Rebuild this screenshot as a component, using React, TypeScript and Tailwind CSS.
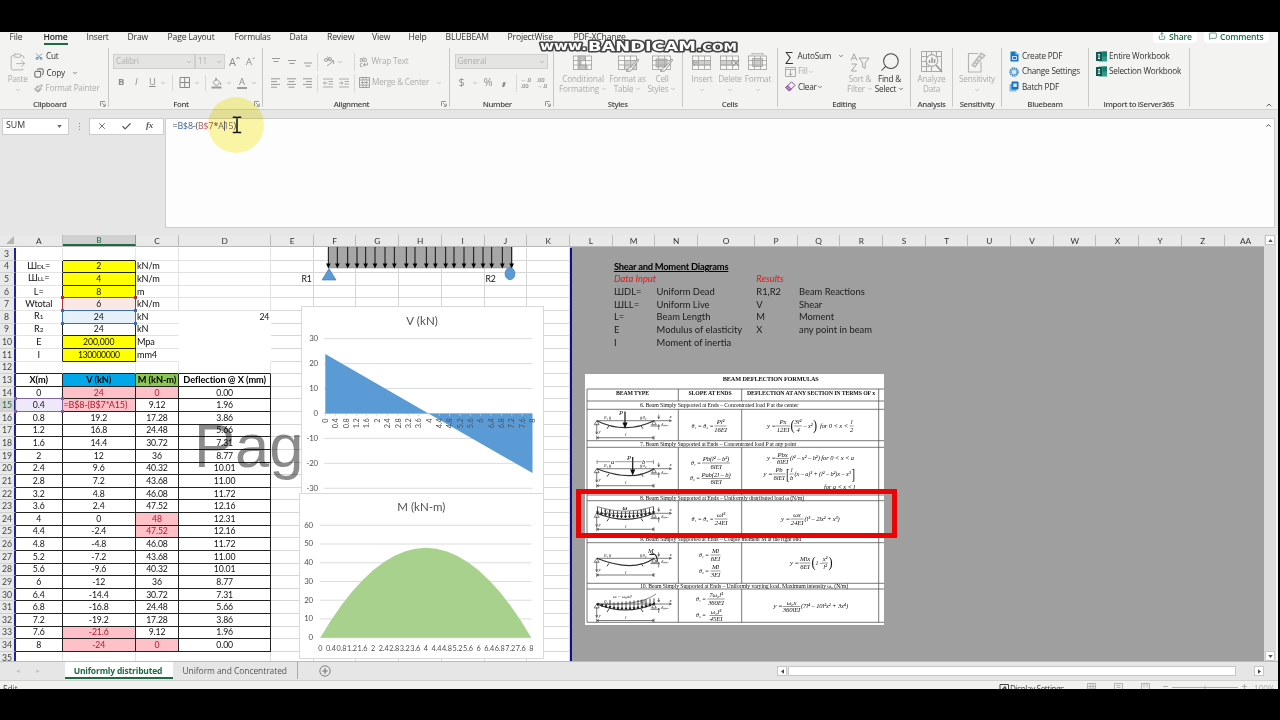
import React from "react";
import { Check, ChevronDown, ChevronUp, ClipboardPaste, Copy, MessageSquare, Paintbrush, Scissors, Search, Share, X } from "lucide-react";

type Kids = { children?: React.ReactNode };

const Caret = ({ c = "text-[#555]" }: { c?: string }) => <ChevronDown className={"h-[6px] w-[6px] shrink-0 " + c} strokeWidth={3} />;

/* ---------- menu tabs ---------- */

const menu: [string, string][] = [
  ["File", "w-[34px]"],
  ["Home", "w-[43px]"],
  ["Insert", "w-[41px]"],
  ["Draw", "w-[40px]"],
  ["Page Layout", "w-[67px]"],
  ["Formulas", "w-[55px]"],
  ["Data", "w-[37.5px]"],
  ["Review", "w-[45px]"],
  ["View", "w-[36.5px]"],
  ["Help", "w-[37px]"],
  ["BLUEBEAM", "w-[62px]"],
  ["ProjectWise", "w-[66px]"],
  ["PDF-XChange", "w-[60px]"],
];

function MenuTabs() {
  return (
    <div className="flex h-[13px] shrink-0 items-start pl-[9.500px] text-[8.600px] leading-[10px] text-[#333]">
      {menu.map(([name, w]) => (
        <div key={name} className={"shrink-0 whitespace-nowrap " + w}>
          <span
            className={
              name === "Home"
                ? "inline-block h-[12.500px] border-b-2 border-[#1e6b43] font-semibold tracking-[-0.2px] text-[#222]"
                : "inline-block tracking-[-0.15px]"
            }
          >
            {name}
          </span>
        </div>
      ))}
      <div className="ml-auto flex h-[11px] w-[44px] items-start gap-[3px] rounded-b-sm bg-white pl-[5px] font-semibold tracking-[-0.2px] text-[#1e6b43]">
        <Share className="h-[8px] w-[8px]" />
        Share
      </div>
      <div className="mr-[9px] ml-[7px] flex h-[11px] w-[65px] items-start gap-[3px] rounded-b-sm bg-white pl-[5px] font-semibold tracking-[-0.2px] text-[#1e6b43]">
        <MessageSquare className="h-[8px] w-[8px]" />
        Comments
      </div>
    </div>
  );
}

/* ---------- ribbon ---------- */

const Launcher = () => (
  <svg viewBox="0 0 6 6" className="h-[6px] w-[6px]" fill="none" stroke="#888" strokeWidth="0.9">
    <path d="M.5 5V.5H5M2 2l3 3M5.3 2.6V5.3H2.6" />
  </svg>
);

function Group({ w, label, launcher, children }: Kids & { w: string; label: string; launcher?: boolean }) {
  return (
    <div className={"flex h-[59px] shrink-0 flex-col border-r border-[#c9c9c7] " + w}>
      <div className="flex h-[50px] shrink-0">{children}</div>
      <div className="flex h-[12px] shrink-0 items-center text-[7.800px] leading-[12px] font-semibold tracking-[-0.350px] text-[#484848]">
        <span className="flex-1 text-center whitespace-nowrap">{label}</span>
        {launcher && (
          <span className="mr-[2px]">
            <Launcher />
          </span>
        )}
      </div>
    </div>
  );
}

function Big({ w, icon, a, b, arrow, dark }: { w: string; icon: React.ReactNode; a: string; b?: string; arrow?: boolean; dark?: boolean }) {
  return (
    <div className={"flex shrink-0 flex-col items-center text-[8.200px] leading-[10.500px] tracking-[-0.2px] whitespace-nowrap " + w + (dark ? " text-[#333]" : " text-[#acacaa]")}>
      <div className="flex h-[25.500px] items-center justify-center pt-[3px]">{icon}</div>
      <div>{a}</div>
      <div className="flex items-center gap-[2px]">
        {b}
        {arrow && (
          <span className={b ? "" : "pt-[3px]"}>
            <Caret c={dark ? "text-[#444]" : "text-[#b4b4b2]"} />
          </span>
        )}
      </div>
    </div>
  );
}

const Row = ({ children, c = "" }: Kids & { c?: string }) => <div className={"flex items-center whitespace-nowrap " + c}>{children}</div>;

const AlignIcon = ({ k }: { k: number }) => {
  const paths = [
    "M1 1.5h8M2.5 4.5h5",
    "M1 3.5h8M2.5 6.5h5",
    "M1 6h8M2.5 9h5",
    "M0 .8h9M0 3.6h6M0 6.4h9M0 9.2h6",
    "M0 .8h9M1.5 3.6h6M0 6.4h9M1.5 9.2h6",
    "M0 .8h9M3 3.6h6M0 6.4h9M3 9.2h6",
  ];
  return (
    <svg viewBox="0 0 10 10" className="h-[10px] w-[10px]" fill="none" stroke="#9a9a98" strokeWidth="1">
      <path d={paths[k]} />
    </svg>
  );
};

const IndentIcon = ({ left }: { left?: boolean }) => (
  <svg viewBox="0 0 10 10" className="h-[10px] w-[10px]" fill="none" stroke="#a4a4a2" strokeWidth="0.9">
    <path d="M0 1h10M5.5 3.5H10M5.5 6H10M0 9h10" />
    <path d={left ? "M4.5 5H.6M2.3 3.2L.5 5l1.8 1.8" : "M0 5h4M2.3 3.2L4.1 5 2.3 6.8"} />
  </svg>
);

const TableIcon = ({ kind }: { kind: "cond" | "table" | "cell" | "ins" | "del" | "fmt" }) => (
  <svg viewBox="0 0 22 19" className="h-[19px] w-[22px]" fill="none" stroke="#a8a8a6" strokeWidth="0.9">
    <rect x="1.5" y="3" width="18" height="13.5" fill="#f8f8f7" />
    {kind === "cond" && <path d="M6 3h7v4.500H6zM6 7.500h3v4.500H6zM6 12h9v4.500H6z" fill="#c3c3c1" />}
    {kind === "table" && <path d="M7.500 7.500h12v9h-12z" fill="#d4d4d2" />}
    {kind === "cell" && <path d="M5 6h11v8H5z" fill="#c3c3c1" />}
    {kind === "ins" && <path d="M1.500 7.500h18v4.500h-18z" fill="#d0d0ce" />}
    {kind === "del" && <path d="M1.500 7.500h11v4.500h-11z" fill="#d0d0ce" />}
    {kind === "fmt" && <path d="M5.500 5.500h10v8h-10z" fill="#cfcfcd" />}
    <path d="M1.5 7.500h18M1.500 12h18M7.500 3v13.500M13.500 3v13.500" />
    {(kind === "table" || kind === "cell") && <path d="M21 6l-7 8c-2 0-2 3-5 4 3 1 6 0 6.500-2.500l6-8z" fill="#f3f3f1" stroke="#8d8d8b" />}
    {kind === "del" && <path d="M14 7l6 6M20 7l-6 6" stroke="#999" strokeWidth="1.200" />}
    {kind === "ins" && <path d="M8 9.700H1M4 7L1 9.700l3 2.800" stroke="#999" />}
    {kind === "fmt" && <path d="M5 .8h11M5-.5v2.600M16-.5v2.600" />}
  </svg>
);

const BookIcon = () => (
  <svg viewBox="0 0 11 11" className="h-[11px] w-[11px]">
    <rect x="3" y=".5" width="8" height="10" fill="#2f9a86" />
    <path d="M6.500 .5H11v5H6.500z" fill="#1c7a6b" />
    <rect x="0" y="1" width="6" height="9" fill="#0f5c55" />
    <path d="M2 3.500h2M3 3.500v4M2 7.500h2" stroke="#fff" strokeWidth=".9" />
  </svg>
);

function Ribbon() {
  return (
    <div className="flex h-[65px] shrink-0 border-b border-[#d2d2d0] pt-[3px] text-[8.200px] tracking-[-0.220px] text-[#333]">
      <Group w="w-[108.500px]" label="Clipboard" launcher>
        <Big w="w-[33.500px] pl-[2px]" a="Paste" arrow icon={<ClipboardPaste className="h-[20px] w-[19px] text-[#b0b0ae]" strokeWidth={1.2} />} />
        <div className="flex flex-col">
          <Row c="h-[17px] gap-[3.500px] pl-[1px]">
            <Scissors className="h-[9px] w-[8px] -rotate-90 text-[#2f6f9f]" strokeWidth={2} />
            Cut
          </Row>
          <Row c="h-[15.500px] gap-[3px]">
            <Copy className="h-[10px] w-[10px] -scale-x-100 text-[#444]" strokeWidth={2} />
            Copy
            <span className="ml-[4px]">
              <Caret />
            </span>
          </Row>
          <Row c="h-[16px] gap-[3px] text-[#acacaa]">
            <Paintbrush className="h-[9px] w-[9px] text-[#999]" strokeWidth={2.5} />
            Format Painter
          </Row>
        </div>
      </Group>
      <Group w="w-[154px]" label="Font" launcher>
        <div className="flex flex-col pt-[5px] pl-[4.500px]">
          <Row c="h-[17px]">
            <div className="flex h-[15px] w-[82px] items-center justify-between border border-[#cfcfcd] bg-[#e4e4e2] px-[2px] text-[#b0b0ae]">
              Calibri <Caret c="text-[#aaa]" />
            </div>
            <div className="flex h-[15px] w-[30px] items-center justify-between border border-[#cfcfcd] bg-[#e4e4e2] px-[2px] text-[#b0b0ae]">
              11 <Caret c="text-[#aaa]" />
            </div>
            <span className="ml-[4px] text-[11px] leading-[12px] text-[#8c8c8a]">Aˆ</span>
            <span className="ml-[6px] text-[9.500px] leading-[12px] text-[#8c8c8a]">Aˇ</span>
          </Row>
          <Row c="mt-[4px] h-[17px] text-[9.500px] text-[#8e8e8c]">
            <span className="w-[16px] pl-[5px] font-bold">B</span>
            <span className="w-[15px] pl-[6px] italic">I</span>
            <span className="w-[11px] pl-[5px] underline">U</span>
            <span className="ml-[5px]">
              <Caret c="text-[#aaa]" />
            </span>
            <div className="mx-[6px] h-[16px] w-px bg-[#d8d8d6]" />
            <svg viewBox="0 0 11 11" className="h-[11px] w-[11px]" fill="none" stroke="#888" strokeWidth="1">
              <path d="M1 .5h9.500v10H1zM5.700 .5v10M1 5.500h9.500" />
            </svg>
            <span className="ml-[4px]">
              <Caret c="text-[#aaa]" />
            </span>
            <div className="mx-[5px] h-[16px] w-px bg-[#d8d8d6]" />
            <svg viewBox="0 0 11 12" className="h-[12px] w-[11px]" fill="none" stroke="#888" strokeWidth=".9">
              <path d="M2 5.500L5.500 2 9 5.500 5.500 9zM5 .5v3.500M9.700 6v2" />
              <path d="M.5 10.500h10" stroke="#9c9c9a" strokeWidth="2" />
            </svg>
            <span className="ml-[4px]">
              <Caret c="text-[#aaa]" />
            </span>
            <span className="ml-[5px] h-[12px] border-b-2 border-[#9c9c9a] px-[2px] leading-[10px]">A</span>
            <span className="ml-[4px]">
              <Caret c="text-[#aaa]" />
            </span>
          </Row>
        </div>
      </Group>
      <Group w="w-[187px]" label="Alignment" launcher>
        <div className="flex flex-col pt-[5px] pl-[8px] text-[#acacaa]">
          <Row c="h-[17px]">
            <div className="flex gap-[6px]">
              <AlignIcon k={0} />
              <AlignIcon k={1} />
              <AlignIcon k={2} />
            </div>
            <div className="mr-[5px] ml-[4px] h-[18px] w-px bg-[#d8d8d6]" />
            <svg viewBox="0 0 12 11" className="mr-[2px] h-[11px] w-[12px]" fill="none" stroke="#9a9a98" strokeWidth=".9">
              <circle cx="3" cy="4" r="1.500" />
              <path d="M4 2.500l1.200 2.700M4.500 .5l2.200 4.200M4 10l6.500-5M10.700 8V4.800H7.500" />
              <circle cx="7" cy="3" r="1.500" />
            </svg>
            <Caret c="text-[#aaa]" />
            <div className="mr-[5px] ml-[11px] h-[18px] w-px bg-[#d8d8d6]" />
            <span className="w-[12px] text-[6.500px] leading-[5px] font-semibold text-[#999]">
              ab
              <br />
              c↵
            </span>
            Wrap Text
          </Row>
          <Row c="mt-[4px] h-[17px]">
            <div className="flex gap-[6px]">
              <AlignIcon k={3} />
              <AlignIcon k={4} />
              <AlignIcon k={5} />
            </div>
            <div className="mr-[5px] ml-[4px] h-[18px] w-px bg-[#d8d8d6]" />
            <div className="flex gap-[6px]">
              <IndentIcon left />
              <IndentIcon />
            </div>
            <div className="mr-[4px] ml-[5px] h-[18px] w-px bg-[#d8d8d6]" />
            <svg viewBox="0 0 11 11" className="mr-[2.500px] h-[11px] w-[11px]" fill="none" stroke="#999" strokeWidth=".9">
              <path d="M.5 .5h10v10H.5zM.5 3h10M.5 8h10M4 .5V3M7 .5V3M4 8v2.500M7 8v2.500M2.500 5.500h6M4 4.300L2.500 5.500 4 6.700M7 4.300l1.500 1.200L7 6.700" />
            </svg>
            Merge &amp; Center
            <span className="ml-[7px]">
              <Caret c="text-[#bbb]" />
            </span>
          </Row>
        </div>
      </Group>
      <Group w="w-[104.500px]" label="Number" launcher>
        <div className="flex flex-col pt-[6px] pl-[5px]">
          <div className="flex h-[15px] w-[93px] items-center justify-between border border-[#cfcfcd] bg-[#e4e4e2] px-[2px] text-[#b0b0ae]">
            General <Caret c="text-[#aaa]" />
          </div>
          <Row c="mt-[5px] h-[17px] pl-[4px] text-[11px] text-[#8e8e8c]">
            <span>$</span>
            <span className="ml-[7px]">
              <Caret c="text-[#aaa]" />
            </span>
            <span className="ml-[6px]">%</span>
            <span className="mt-[-12px] ml-[9px] text-[19px] leading-[12px] font-bold">,</span>
            <div className="mr-[4px] ml-[9px] h-[18px] w-px bg-[#d8d8d6]" />
            <span className="w-[16px] text-[6px] leading-[6px] font-semibold">
              ←.0
              <br />
              .00
            </span>
            <span className="text-[6px] leading-[6px] font-semibold">
              .00
              <br />→.0
            </span>
          </Row>
        </div>
      </Group>
      <Group w="w-[128.500px]" label="Styles">
        <Big w="w-[58px]" a="Conditional" b="Formatting" arrow icon={<TableIcon kind="cond" />} />
        <Big w="w-[31px]" a="Format as" b="Table" arrow icon={<TableIcon kind="table" />} />
        <Big w="w-[38px]" a="Cell" b="Styles" arrow icon={<TableIcon kind="cell" />} />
      </Group>
      <Group w="w-[95.500px]" label="Cells">
        <Big w="w-[39px]" a="Insert" arrow icon={<TableIcon kind="ins" />} />
        <Big w="w-[17px]" a="Delete" arrow icon={<TableIcon kind="del" />} />
        <Big w="w-[39px]" a="Format" arrow icon={<TableIcon kind="fmt" />} />
      </Group>
      <Group w="w-[133px]" label="Editing">
        <div className="flex w-[68px] shrink-0 flex-col pl-[7px]">
          <Row c="h-[16px]">
            <span className="w-[12.500px] text-[13px] leading-[12px]">∑</span>AutoSum
            <span className="ml-[7px]">
              <Caret />
            </span>
          </Row>
          <Row c="h-[15px] text-[#b0b0ae]">
            <svg viewBox="0 0 11 10" className="mr-[2px] h-[10px] w-[11px]" fill="none" stroke="#a5a5a3" strokeWidth=".9">
              <path d="M.5 .5h10v9H.5zM.5 2.500h10M5.500 3.500v5M3.700 6.500l1.800 2 1.800-2" />
            </svg>
            Fill <Caret c="text-[#bbb]" />
          </Row>
          <Row c="h-[15.500px]">
            <svg viewBox="0 0 11 11" className="mr-[2px] h-[11px] w-[11px]" fill="none" stroke="#8a4a94" strokeWidth="1">
              <path d="M.8 6.500L6.500 .8l3.500 3.500L4.300 10z" />
              <path d="M.8 6.500l2-2 3.500 3.500-2 2z" fill="#b58abf" />
            </svg>
            Clear <Caret />
          </Row>
        </div>
        <Big
          w="w-[28px]"
          a="Sort &"
          b="Filter"
          arrow
          icon={
            <svg viewBox="0 0 20 19" className="h-[19px] w-[20px]" fill="none" stroke="#a6a6a4" strokeWidth="1">
              <path d="M1 7.500L4 .8l3 6.700M2.200 5.300h3.700M1.300 11h5.400L1.300 18h5.400M9 5h10l-3.800 5v5.500l-2.500-1.500v-4z" />
            </svg>
          }
        />
        <Big w="w-[31px]" a="Find &" b="Select" arrow dark icon={<Search className="h-[22px] w-[22px] -scale-x-100 text-[#444]" strokeWidth={1.1} />} />
      </Group>
      <Group w="w-[42px]" label="Analysis">
        <Big
          w="w-[41px]"
          a="Analyze"
          b="Data"
          icon={
            <svg viewBox="0 0 22 22" className="h-[22px] w-[22px]" fill="none" stroke="#999" strokeWidth="1">
              <path d="M.5 .5h20v20H.5zM.5 5.500h20M.5 10.500h5M.5 15.500h8M5.500 .5v20M10.500 .5v4M15.500 .5v5M10.500 16v5" stroke="#aaa" />
              <circle cx="11" cy="9.500" r="5.800" fill="#f5f5f3" />
              <path d="M8.500 12V9M11 12V6.500M13.500 12V8" strokeWidth="1.500" />
              <path d="M15 14l6 7" strokeWidth="1.600" />
            </svg>
          }
        />
      </Group>
      <Group w="w-[49px]" label="Sensitivity">
        <Big
          w="w-[48px]"
          a="Sensitivity"
          arrow
          icon={
            <svg viewBox="0 0 20 21" className="h-[21px] w-[20px]" fill="none" stroke="#b2b2b0" strokeWidth="1.100">
              <path d="M11 1.500H1.500v18.500H14V10" />
              <path d="M5 13l7-9 3 2-7 9zM12 4l2-3 4 2.500-2.500 3M7 10l3 2M9 7.500l3 2" fill="#dededc" />
            </svg>
          }
        />
      </Group>
      <Group w="w-[87px]" label="Bluebeam">
        <div className="flex flex-col pl-[7px]">
          <Row c="h-[16px] gap-[3px]">
            <svg viewBox="0 0 10 11" className="h-[11px] w-[10px]">
              <path d="M1.500 .5h5l3 3v7h-8z" fill="#1878c8" />
              <path d="M6.500 .5v3h3" fill="#9fd0f5" />
              <path d="M3.500 5.500h4v3h-4z" fill="none" stroke="#fff" strokeWidth=".8" />
            </svg>
            Create PDF
          </Row>
          <Row c="h-[15px] gap-[3px]">
            <svg viewBox="0 0 10 10" className="h-[10px] w-[10px]" fill="none">
              <circle cx="5" cy="5" r="3.900" stroke="#4a92cf" strokeWidth="1.800" strokeDasharray="1.600 .6" />
              <circle cx="5" cy="5" r="2.800" stroke="#4a92cf" strokeWidth=".8" fill="#d9ebf8" />
            </svg>
            Change Settings
          </Row>
          <Row c="h-[15.500px] gap-[3px]">
            <svg viewBox="0 0 10 11" className="h-[11px] w-[10px]">
              <rect x=".5" y="3" width="7" height="7.500" rx="1" fill="#7db9ea" />
              <rect x="2.500" y=".5" width="7" height="8" rx="1" fill="#1a6fbd" />
              <rect x="4.300" y="2.500" width="3.500" height="3.500" fill="#d6eafa" />
            </svg>
            Batch PDF
          </Row>
        </div>
      </Group>
      <Group w="w-[100.500px]" label="Import to iServer365">
        <div className="flex flex-col pl-[7px]">
          <Row c="h-[16px] gap-[2px]">
            <BookIcon />
            Entire Workbook
          </Row>
          <Row c="h-[15px] gap-[2px]">
            <BookIcon />
            Selection Workbook
          </Row>
        </div>
      </Group>
      <ChevronUp className="mt-[53px] mr-[5px] ml-auto h-[8px] w-[8px] text-[#444]" strokeWidth={2.5} />
    </div>
  );
}

/* ---------- formula bar ---------- */

function FormulaBar() {
  return (
    <div className="flex h-[125px] shrink-0 bg-[#e6e6e6] pt-[7.500px] pl-[2px] text-[8.800px]">
      <div className="flex h-[17px] w-[67px] items-center justify-between border border-[#cdcdcd] bg-white pr-[6px] pl-[3px] text-[#333]">
        SUM
        <svg viewBox="0 0 6 4" className="h-[3px] w-[5px]">
          <path d="M0 0h6L3 4z" fill="#666" />
        </svg>
      </div>
      <div className="flex h-[17px] w-[20px] flex-col items-center justify-center gap-[2px]">
        <i className="h-px w-px bg-[#888]" />
        <i className="h-px w-px bg-[#888]" />
        <i className="h-px w-px bg-[#888]" />
      </div>
      <div className="flex h-[17px] w-[75px] items-center border border-[#cdcdcd] bg-white text-[#555]">
        <X className="ml-[7px] h-[10px] w-[10px]" strokeWidth={2} />
        <Check className="ml-[14px] h-[11px] w-[11px]" strokeWidth={2.5} />
        <span className="ml-[14px] font-['Liberation_Serif',serif] text-[9px] font-bold tracking-[-0.2px] italic">fx</span>
      </div>
      <div className="ml-[1px] flex h-[110px] w-[1110px] items-start justify-between border border-[#cdcdcd] bg-[#fdfdfd] pt-[1px] pr-[2px] pl-[6.500px]">
        <span className="leading-[12px] tracking-[-0.120px] whitespace-nowrap text-[#444]">
          =<span className="text-[#3a68a8]">B$8</span>-(<span className="text-[#b5555a]">B$7</span>*<span className="text-[#7b6c98]">A15</span>)
        </span>
        <ChevronUp className="mt-[2px] h-[7px] w-[7px] text-[#333]" strokeWidth={3} />
      </div>
    </div>
  );
}

/* ---------- sheet ---------- */

const leftCols: [string, string][] = [
  ["A", "w-[46.500px]"],
  ["B", "w-[73.500px]"],
  ["C", "w-[43px]"],
  ["D", "w-[92.300px]"],
  ["E", "w-[42.500px]"],
  ["F", "w-[42.700px]"],
  ["G", "w-[42.700px]"],
  ["H", "w-[42.700px]"],
  ["I", "w-[42.700px]"],
  ["J", "w-[42.700px]"],
  ["K", "w-[42.700px]"],
];

const rightCols: [string, string][] = [
  ["L", "w-[42.700px]"],
  ["M", "w-[42.700px]"],
  ["N", "w-[42.700px]"],
  ["O", "w-[57px]"],
  ["P", "w-[42.700px]"],
  ["Q", "w-[42.700px]"],
  ["R", "w-[42.700px]"],
  ["S", "w-[42.700px]"],
  ["T", "w-[42.700px]"],
  ["U", "w-[42.700px]"],
  ["V", "w-[42.700px]"],
  ["W", "w-[42.700px]"],
  ["X", "w-[42.700px]"],
  ["Y", "w-[42.700px]"],
  ["Z", "w-[42.700px]"],
  ["AA", "w-[42.700px]"],
];

const rows = Array.from({ length: 33 }, (_, i) => i + 3);

const table: [string, string, string, string][] = [
  ["0", "24", "0", "0.00"],
  ["0.4", "=B$8-(B$7*A15)", "9.12", "1.96"],
  ["0.8", "19.2", "17.28", "3.86"],
  ["1.2", "16.8", "24.48", "5.66"],
  ["1.6", "14.4", "30.72", "7.31"],
  ["2", "12", "36", "8.77"],
  ["2.4", "9.6", "40.32", "10.01"],
  ["2.8", "7.2", "43.68", "11.00"],
  ["3.2", "4.8", "46.08", "11.72"],
  ["3.6", "2.4", "47.52", "12.16"],
  ["4", "0", "48", "12.31"],
  ["4.4", "-2.4", "47.52", "12.16"],
  ["4.8", "-4.8", "46.08", "11.72"],
  ["5.2", "-7.2", "43.68", "11.00"],
  ["5.6", "-9.6", "40.32", "10.01"],
  ["6", "-12", "36", "8.77"],
  ["6.4", "-14.4", "30.72", "7.31"],
  ["6.8", "-16.8", "24.48", "5.66"],
  ["7.2", "-19.2", "17.28", "3.86"],
  ["7.6", "-21.6", "9.12", "1.96"],
  ["8", "-24", "0", "0.00"],
];

const sub = (t: string) => (
  <>
    Ш<span className="text-[6.500px]">{t}</span>=
  </>
);

const inputs: Record<string, React.ReactNode> = {
  A4: sub("DL"), B4: "2", C4: "kN/m",
  A5: sub("LL"), B5: "4", C5: "kN/m",
  A6: "L=", B6: "8", C6: "m",
  A7: "Wtotal", B7: "6", C7: "kN/m",
  A8: <>R<span className="text-[6.500px]">1</span></>, B8: "24", C8: "kN", D8: "24",
  A9: <>R<span className="text-[6.500px]">2</span></>, B9: "24", C9: "kN",
  A10: "E", B10: "200,000", C10: "Mpa",
  A11: "I", B11: "130000000", C11: "mm4",
  A13: "X(m)", B13: "V (kN)", C13: "M (kN-m)", D13: "Deflection @ X (mm)",
  E5: "R1", J5: "R2",
};

const notes: Record<string, string> = {
  M4: "Shear and Moment Diagrams",
  M5: "Data Input", P5: "Results",
  M6: "ШDL=", N6: "Uniform Dead", P6: "R1,R2", Q6: "Beam Reactions",
  M7: "ШLL=", N7: "Uniform Live", P7: "V", Q7: "Shear",
  M8: "L=", N8: "Beam Length", P8: "M", Q8: "Moment",
  M9: "E", N9: "Modulus of elasticity", P9: "X", Q9: "any point in beam",
  M10: "I", N10: "Moment of inertia",
};

const pink = new Set(["B14", "C14", "B15", "C24", "C25", "B33", "B34", "C34"]);

function cellClass(col: string, r: number) {
  const id = col + r;
  const inTable = r >= 13 && r <= 34 && "ABCD".includes(col);
  const inputBox = col === "B" && r >= 4 && r <= 11;
  let s = "";
  if (inTable || inputBox) s += " border-[#222]";
  else if (col === "B" && r === 3) s += " border-b-[#222] border-r-[#e9e9e9]";
  else if ("ABCD".includes(col) && r === 12) s += " border-b-[#222] border-r-[#e9e9e9]";
  else if (col === "A" && r >= 4 && r <= 11) s += " border-r-[#222] border-b-[#e4e4e4]";
  else if (col === "D" && r >= 8) s += r === 35 ? " border-[#dcdcdc]" : " border-transparent";
  else if (col === "C" && r >= 8) s += " border-b-[#e4e4e4] border-r-transparent";
  else if ("ABCD".includes(col)) s += " border-[#e2e2e2]";
  else s += " border-[#d6d6d6]";
  if (pink.has(id)) s += " bg-[#ffc0c8] text-[#a82030]";
  else if (id === "B13") s += " bg-[#00a8ea]";
  else if (id === "C13") s += " bg-[#8cc653]";
  else if (id === "A15") s += " bg-[#efe8f8]";
  else if (id === "B7") s += " bg-[#f9e8e6]";
  else if (id === "B8") s += " bg-[#e6f0fa]";
  else if (inputBox && r !== 9) s += " bg-[#ffff00]";
  if (r === 13) s += " text-[9.200px] tracking-[-0.050px] font-bold text-black";
  else if (id === "B15") s += " text-[9px] tracking-[-0.150px]";
  else if (id === "B11") s += " tracking-[-0.400px]";
  else if (r < 13 && (col === "A" || col === "C")) s += " text-[9.200px]";
  if (id === "B15" || col === "J") s += " justify-start pl-[1px]";
  else if (col === "C" && r < 13) s += " justify-start pl-[1px]";
  else if (id === "D8" || col === "E") s += " justify-end pr-[1px]";
  else s += " justify-center";
  return s;
}

const Selection = ({ c }: { c: "red" | "blue" | "purple" }) => {
  const line = { red: "border-[#b03038]", blue: "border-[#3b6ea8]", purple: "border-[#8064a2]" }[c];
  const dot = { red: "bg-[#b03038]", blue: "bg-[#3b6ea8]", purple: "bg-[#8064a2]" }[c];
  return (
    <span className={"absolute -top-px -right-px -bottom-px -left-px z-10 border " + line}>
      <i className={"absolute -top-[2px] -left-[2px] h-[3px] w-[3px] " + dot} />
      <i className={"absolute -top-[2px] -right-[2px] h-[3px] w-[3px] " + dot} />
      <i className={"absolute -bottom-[2px] -left-[2px] h-[3px] w-[3px] " + dot} />
      <i className={"absolute -right-[2px] -bottom-[2px] h-[3px] w-[3px] " + dot} />
    </span>
  );
};

function SheetRow({ r }: { r: number }) {
  return (
    <div className="flex h-[12.640px] shrink-0">
      <div
        className={
          "flex w-[16px] shrink-0 items-center border-r-2 border-b border-b-[#cfcfcf] border-r-[#22229a] " +
          (r === 15 ? "bg-[#d4d4d4] text-[#1e6b43]" : "bg-[#e9e9e9] text-[#444]") +
          (r < 10 ? " pl-[4px]" : " pl-[2px]")
        }
      >
        {r}
      </div>
      {leftCols.map(([c, w]) => {
        const id = c + r;
        const text = r >= 14 && r <= 34 && "ABCD".includes(c) ? table[r - 14]["ABCD".indexOf(c)] : inputs[id];
        return (
          <div key={c} className={"relative flex shrink-0 items-center border-r border-b whitespace-nowrap " + w + cellClass(c, r)}>
            <span>{text}</span>
            {id === "B7" && <Selection c="red" />}
            {id === "B8" && <Selection c="blue" />}
            {id === "A15" && <Selection c="purple" />}
          </div>
        );
      })}
      <div className="w-[2.500px] shrink-0 bg-[#10108c]" />
      <div className="w-[40px] shrink-0" />
      {rightCols.slice(1, 7).map(([c, w]) => {
        const id = c + r;
        return (
          <div
            key={c}
            className={
              "flex shrink-0 items-center pl-[1.500px] text-[9.400px] tracking-normal whitespace-nowrap text-[#1c1c1c] " +
              w +
              (id === "M4" ? " font-bold text-black tracking-[-0.250px]! underline" : "") +
              (r === 5 ? " text-[#e01818]! italic" : "")
            }
          >
            {notes[id]}
          </div>
        );
      })}
    </div>
  );
}

function ColumnHeads() {
  const head = ([c, w]: [string, string]) => (
    <div
      key={c}
      className={
        "flex shrink-0 items-center justify-center border-r " +
        w +
        (c === "B" ? " border-b-2 border-r-[#999] border-b-[#1e6b43] bg-[#d0d0d0] text-[#1e6b43]" : " border-r-[#bdbdbd]")
      }
    >
      {c}
    </div>
  );
  return (
    <div className="flex h-[12px] shrink-0 overflow-hidden border-b border-[#b8b8b8] bg-[#e9e9e9] text-[8.300px] text-[#333]">
      <div className="flex w-[16px] shrink-0 items-end justify-end pr-[2px] pb-[2px]">
        <svg viewBox="0 0 8 8" className="h-[8px] w-[8px]">
          <path d="M8 0v8H0z" fill="#b4b4b4" />
        </svg>
      </div>
      {leftCols.map(head)}
      {rightCols.map(head)}
    </div>
  );
}

/* ---------- charts and drawings ---------- */

const steps = Array.from({ length: 21 }, (_, i) => String(Math.round(i * 4) / 10));

function LoadDrawing() {
  const xs = [145, 172, 203, 231, 257, 285, 315, 343, 379, 405, 439, 466, 497, 522, 552, 581, 609, 635, 667, 695].map((v) => 280 + v / 3);
  return (
    <svg viewBox="320 247 200 34" className="absolute top-0 left-[320px] h-[34px] w-[200px]">
      <rect x="328.500" y="247" width="183.500" height="21" fill="#a6a6a6" stroke="#888" strokeWidth=".5" />
      {xs.map((x) => (
        <g key={x}>
          <path d={`M${x} 247v18`} stroke="#111" strokeWidth="1" />
          <path d={`M${x - 2.3} 263.500h4.600l-2.300 5z`} fill="#000" />
        </g>
      ))}
      <path d="M329 268.500l7 11.500h-14z" fill="#5b9bd5" stroke="#41719c" strokeWidth=".6" />
      <ellipse cx="510" cy="273.700" rx="5" ry="6" fill="#5b9bd5" stroke="#41719c" strokeWidth=".6" />
    </svg>
  );
}

function ShearChart() {
  return (
    <svg viewBox="301 306 243 188" className="absolute top-[59px] left-[301px] h-[188px] w-[243px] font-['Lato',sans-serif]" fill="#505050">
      <rect x="301.500" y="306.500" width="242" height="187" fill="#fff" stroke="#d9d9d9" />
      <text x="406.300" y="325" fontSize="11.500" textLength="31.500">
        V (kN)
      </text>
      {[30, 20, 10, 0, -10, -20, -30].map((v, i) => (
        <g key={v}>
          <path d={`M324 ${338.7 + i * 24.93}h208.500`} stroke="#dcdcdc" />
          <text x="318" y={341 + i * 24.93} fontSize="7.800" textAnchor="end">
            {v}
          </text>
        </g>
      ))}
      <path d="M325.300 354v59.500H428.500zM428.500 413.500h104V473z" fill="#5b9bd5" />
      <g stroke="#b7d0e8" strokeWidth=".7">
        {steps.map((s, i) => (
          <path key={s} d={`M${325.3 + i * 10.36} 413.500v2.500`} />
        ))}
      </g>
      {steps.map((s, i) => (
        <text key={s} transform={`translate(${328 + i * 10.36} 418.500) rotate(-90)`} fontSize="7.300" textAnchor="end">
          {s}
        </text>
      ))}
    </svg>
  );
}

function MomentChart() {
  const pts = Array.from({ length: 21 }, (_, i) => {
    const x = i * 0.4;
    const m = 24 * x - 3 * x * x;
    return `${(320.3 + i * 10.55).toFixed(2)} ${(637.7 - m * 1.873).toFixed(2)}`;
  });
  return (
    <svg viewBox="299 493 245 166" className="absolute top-[246px] left-[299px] h-[166px] w-[245px] font-['Lato',sans-serif]" fill="#505050">
      <rect x="299.500" y="493.500" width="244" height="165" fill="#fff" stroke="#d9d9d9" />
      <text x="397.300" y="511.300" fontSize="11.500" textLength="48">
        M (kN-m)
      </text>
      {[60, 50, 40, 30, 20, 10, 0].map((v, i) => (
        <g key={v}>
          <path d={`M320 ${525.3 + i * 18.73}h211.300`} stroke="#dcdcdc" />
          <text x="313" y={527.7 + i * 18.73} fontSize="7.800" textAnchor="end">
            {v}
          </text>
        </g>
      ))}
      <path d={"M" + pts.join("L") + "z"} fill="#a9d18e" />
      {steps.map((s, i) => (
        <text key={s} x={320.3 + i * 10.55} y="650.500" fontSize="7.300" textAnchor="middle" letterSpacing="-.1">
          {s}
        </text>
      ))}
    </svg>
  );
}

/* one formula fragment: a fraction centred on x, with its bar at y */
const Frac = ({ x, y, n, d, w }: { x: number; y: number; n: string; d: string; w: number }) => (
  <g>
    <text x={x} y={y - 1.7} textAnchor="middle">{n}</text>
    <path d={`M${x - w / 2} ${y}h${w}`} stroke="#333" strokeWidth=".5" />
    <text x={x} y={y + 5.8} textAnchor="middle">{d}</text>
  </g>
);

const At = ({ x, y, w, t }: { x: number; y: number; w?: number; t: string }) => (
  <text x={x} y={y} textLength={w} lengthAdjust="spacingAndGlyphs">{t}</text>
);

function Beam({ y, dim, sag, mid = 625.3 }: { y: number; dim: number; sag: number; mid?: number }) {
  return (
    <g fill="none" stroke="#444" strokeWidth=".7">
      <path d={`M596.700 ${y}H671M669 ${y - 1}l2.500 1-2.500 1`} />
      <path d={`M596.700 ${y}Q${mid} ${y + sag * 2} 654 ${y}`} strokeWidth="1.200" stroke="#333" />
      <path d={`M596.700 ${y}l-2.500 4h5zM654 ${y}l-2.300 4h4.600zM650.500 ${y + 5.3}h7`} />
      <path d={`M596.700 ${y + 3}v10M595.700 ${y + 11}l1 2.500 1-2.500`} />
      <path d={`M596.700 ${dim - 2}v4M654 ${dim - 2}v4M597 ${dim}h57M599 ${dim - 1}l-2 1 2 1M652 ${dim - 1}l2 1-2 1`} />
      <path d={`M658.700 ${y - 6}v4M658.700 ${y + 9}v-5M657.700 ${y - 4}l1 2 1-2M657.700 ${y + 6}l1-2 1 2`} />
      <path d={`M610 ${y - 4}v3M641 ${y - 4}v3M607 ${y + 8}l2-3M643 ${y + 8}l-2-3`} strokeWidth="1" />
      <g fill="#222" stroke="none" fontSize="5" fontStyle="italic">
        <text x="604" y={y - 1.5}>θ₁</text>
        <text x="642.500" y={y - 1.5}>θ₂</text>
        <text x="598.500" y={y + 12.5}>y</text>
        <text x="625" y={dim - 1.5}>l</text>
        <text x="669.500" y={y - 2.5}>x</text>
        <text x="661" y={y + 5}>δₘₐₓ</text>
      </g>
    </g>
  );
}

function FormulaPicture() {
  const heads: [number, number, string][] = [
    [640, 407.2, "6. Beam Simply Supported at Ends – Concentrated load P at the center"],
    [640, 446, "7. Beam Simply Supported at Ends – Concentrated load P at any point"],
    [640, 499.5, "8. Beam Simply Supported at Ends – Uniformly distributed load ω (N/m)"],
    [640, 541, "9. Beam Simply Supported at Ends – Couple moment M at the right end"],
    [640, 588, "10. Beam Simply Supported at Ends – Uniformly varying load. Maximum intensity ω₀ (N/m)"],
  ];
  const widths = [158, 156, 164, 161, 208];
  const ticks = Array.from({ length: 15 }, (_, i) => i);
  return (
    <svg viewBox="585 374 299 251" className="absolute top-[127px] left-[585px] h-[251px] w-[299px] font-['Liberation_Serif',serif]" fill="#111" fontSize="6.700">
      <rect x="585" y="374" width="299" height="251" fill="#fff" />
      <g stroke="#555" strokeWidth=".8">
        <path d="M587 389H884M587 401H884M587 409.300H884M587 440.700H884M587 447.300H884M587 495H884M587 500.700H884M587 533.500H884M587 542.700H884M587 583.300H884M587 589H884M587 622.300H884" />
        <path d="M587 389V622.300M678.300 389v12M678.300 409.300v31.400M678.300 447.300V495M678.300 500.700v34M678.300 542.700v40.600M678.300 589v33.300M741.700 389v12M741.700 409.300v31.400M741.700 447.300V495M741.700 500.700v34M741.700 542.700v40.600M741.700 589v33.300M878.700 389V622.300" />
      </g>
      <g fontWeight="bold" fontSize="6.300">
        <At x={722.7} y={381.3} w={96} t="BEAM DEFLECTION FORMULAS" />
        <At x={616} y={395} w={33} t="BEAM TYPE" />
        <At x={688.5} y={395} w={43} t="SLOPE AT ENDS" />
        <At x={747} y={395} w={128} t="DEFLECTION AT ANY SECTION IN TERMS OF x" />
      </g>
      <g fontSize="6">
        {heads.map(([x, y, t], i) => (
          <At key={t} x={x} y={y} w={widths[i]} t={t} />
        ))}
      </g>

      <Beam y={420.7} dim={437.7} sag={7} />
      <path d="M625 411.500v13M623.300 423l1.700 4 1.700-4z" stroke="#111" strokeWidth="1.200" />
      <text x="619" y="415" fontStyle="italic">P</text>

      <Beam y={468.7} dim={485.7} sag={7} mid={633} />
      <path d="M632.700 457v14M631 470l1.700 4 1.700-4z" stroke="#111" strokeWidth="1.200" />
      <path d="M597 461.700h56M597 460v4M653.500 460v4" stroke="#555" strokeWidth=".6" />
      <text x="627" y="459.500" fontStyle="italic">P</text>
      <text x="611" y="464" fontStyle="italic" stroke="#fff" strokeWidth="2" paintOrder="stroke">a</text>
      <text x="642" y="464" fontStyle="italic" stroke="#fff" strokeWidth="2" paintOrder="stroke">b</text>

      <Beam y={513.3} dim={529.3} sag={6} />
      <path d="M596.700 506.500Q625 516 654 506.500" fill="none" stroke="#555" strokeWidth=".7" />
      {ticks.map((i) => {
        const x = 597.5 + i * 4;
        const s = 1 - Math.pow((x - 625.3) / 28.6, 2);
        return <path key={i} d={`M${x} ${507 + s * 4.5}v6M${x - 1} ${511.5 + s * 4.5}l1 2 1-2z`} stroke="#222" strokeWidth=".8" />;
      })}
      <text x="622.500" y="510" fontStyle="italic" fontWeight="bold">ω</text>

      <Beam y={558.3} dim={575} sag={7.3} mid={634} />
      <path d="M651 554.500c4-2 7 2 6 8M649.500 554.500h4" fill="none" stroke="#222" strokeWidth="1.200" />
      <text x="648" y="552.500" fontStyle="italic">M</text>

      <Beam y={604} dim={620.5} sag={6} />
      <path d="M596.700 604Q640 606 656 594" fill="none" stroke="#555" strokeWidth=".7" />
      {ticks.map((i) => {
        const x = 598 + i * 4;
        const s = 1 - Math.pow((x - 625.3) / 28.6, 2);
        return <path key={i} d={`M${x} ${604 - i * 0.4}V${604 + s * 5}M${x - 1} ${603 + s * 5}l1 2 1-2z`} stroke="#222" strokeWidth=".8" />;
      })}
      <text x="613" y="597.500" fontStyle="italic" fontSize="5">ω = ω₀x/l</text>

      <g fontStyle="italic">
        <At x={691.5} y={427.5} w={22} t="θ₁ = θ₂ =" />
        <Frac x={720.5} y={426} w={12} n="Pl²" d="16EI" />
        <At x={767} y={427.5} w={9} t="y =" />
        <Frac x={783} y={426} w={14} n="Px" d="12EI" />
        <text x="790.500" y="430" fontSize="14" fontStyle="normal" textLength="4" lengthAdjust="spacingAndGlyphs">(</text>
        <Frac x={798} y={426} w={8} n="3l²" d="4" />
        <At x={803.5} y={427.5} w={9} t="– x²" />
        <text x="813" y="430" fontSize="14" fontStyle="normal" textLength="4" lengthAdjust="spacingAndGlyphs">)</text>
        <At x={820} y={427.5} w={28} t="for  0 < x <" />
        <Frac x={851.5} y={426} w={4} n="l" d="2" />

        <At x={691} y={465} w={10} t="θ₁ =" />
        <Frac x={716} y={463} w={28} n="Pb(l² – b²)" d="6lEI" />
        <At x={690} y={480} w={10} t="θ₂ =" />
        <Frac x={716} y={478.5} w={29} n="Pab(2l – b)" d="6lEI" />
        <At x={767} y={460} w={9} t="y =" />
        <Frac x={782.5} y={458.5} w={13} n="Pbx" d="6lEI" />
        <At x={790} y={460} w={64} t="(l² – x² – b²) for  0 < x < a" />
        <At x={763.5} y={475.5} w={9} t="y =" />
        <Frac x={779} y={474} w={13} n="Pb" d="6lEI" />
        <text x="786" y="479" fontSize="15" fontStyle="normal" textLength="3.500" lengthAdjust="spacingAndGlyphs">[</text>
        <Frac x={791.5} y={474} w={4} n="l" d="b" />
        <At x={794.5} y={475.5} w={56} t="(x – a)³ + (l² – b²)x – x³" />
        <text x="851.500" y="479" fontSize="15" fontStyle="normal" textLength="3.500" lengthAdjust="spacingAndGlyphs">]</text>
        <At x={824} y={489} w={31} t="for  a < x < l" />

        <At x={691.5} y={520.5} w={22} t="θ₁ = θ₂ =" />
        <Frac x={721} y={519} w={13} n="ωl³" d="24EI" />
        <At x={781} y={520.5} w={9} t="y =" />
        <Frac x={797} y={519} w={13} n="ωx" d="24EI" />
        <At x={804.5} y={520.5} w={35} t="(l³ – 2lx² + x³)" />

        <At x={699} y={556.5} w={10} t="θ₁ =" />
        <Frac x={715.5} y={555} w={10} n="Ml" d="6EI" />
        <At x={699} y={572.5} w={10} t="θ₂ =" />
        <Frac x={715.5} y={571} w={10} n="Ml" d="3EI" />
        <At x={790} y={564.5} w={9} t="y =" />
        <Frac x={805} y={563} w={11} n="Mlx" d="6EI" />
        <text x="811.500" y="567" fontSize="14" fontStyle="normal" textLength="4" lengthAdjust="spacingAndGlyphs">(</text>
        <At x={815.5} y={564.5} w={7} t="1 –" />
        <Frac x={825} y={563} w={6} n="x²" d="l²" />
        <text x="828.500" y="567" fontSize="14" fontStyle="normal" textLength="4" lengthAdjust="spacingAndGlyphs">)</text>

        <At x={696} y={600.5} w={10} t="θ₁ =" />
        <Frac x={716} y={599} w={17} n="7ω₀l³" d="360EI" />
        <At x={696} y={617} w={10} t="θ₂ =" />
        <Frac x={716} y={615.5} w={13} n="ω₀l³" d="45EI" />
        <At x={773.5} y={608} w={9} t="y =" />
        <Frac x={791.5} y={606.5} w={17} n="ω₀x" d="360lEI" />
        <At x={801} y={608} w={47} t="(7l⁴ – 10l²x² + 3x⁴)" />
      </g>
    </svg>
  );
}

/* ---------- bottom bars ---------- */

function SheetTabs() {
  return (
    <div className="flex h-[19px] shrink-0 items-start border-t border-[#bcbcbc] bg-[#e6e6e6] text-[8.500px] text-[#555]">
      <div className="flex h-[19px] w-[65px] items-center gap-[14px] pl-[15px] text-[6px] text-[#c4c4c4]">
        <span>◄</span>
        <span>►</span>
      </div>
      <div className="flex h-[17px] w-[108px] items-center justify-center border-b-2 border-[#1e6b43] bg-white pt-[3px] pr-[2px] font-bold tracking-[-0.180px] whitespace-nowrap text-[#1e6b43]">
        Uniformly distributed
      </div>
      <div className="flex h-[17px] w-[124.500px] items-center justify-center border-r border-[#aaa] pt-[2px] tracking-[-0.080px] whitespace-nowrap">
        Uniform and Concentrated
      </div>
      <svg viewBox="0 0 12 12" className="mt-[3px] ml-[21.500px] h-[12px] w-[12px]" fill="none" stroke="#777">
        <circle cx="6" cy="6" r="5.200" strokeWidth=".9" />
        <path d="M3.300 6h5.400M6 3.300v5.400" strokeWidth="1.200" />
      </svg>
      <div className="mt-[4px] ml-[446px] flex h-[11px] w-[487px]">
        <div className="flex h-[10px] w-[10px] items-center justify-center border border-[#c6c6c6] bg-white">
          <svg viewBox="0 0 4 6" className="h-[5px] w-[3px]"><path d="M4 0v6L0 3z" fill="#444" /></svg>
        </div>
        <div className="ml-[1px] h-[10px] w-[447.500px] border border-[#c6c6c6] bg-white" />
        <div className="ml-auto flex h-[10px] w-[10px] items-center justify-center border border-[#c6c6c6] bg-white">
          <svg viewBox="0 0 4 6" className="h-[5px] w-[3px]"><path d="M0 0v6l4-3z" fill="#444" /></svg>
        </div>
      </div>
    </div>
  );
}

function StatusBar() {
  return (
    <div className="flex h-[9px] shrink-0 items-start overflow-hidden border-t border-[#cfcfcf] bg-[#f1f1ef] pt-[2px] text-[8.200px] leading-[11px] text-[#444]">
      <span className="w-[999px] pl-[3px]">Edit</span>
      <svg viewBox="0 0 10 9" className="mr-[1px] h-[9px] w-[10px]" fill="none" stroke="#444" strokeWidth="1">
        <path d="M1 9V1.500h8.500V7" />
        <path d="M3 7l3-3 1 2" strokeWidth="1.500" />
      </svg>
      <span className="w-[76px] tracking-[-0.4px] whitespace-nowrap">Display Settings</span>
      <svg viewBox="0 0 66 10" className="h-[10px] w-[66px]" fill="none" stroke="#b5b5b3">
        <path d="M1.500 .5h8v9M1.500 .5v9M1.500 3.500h8M1.500 6h8M4.200 .5v9M7 .5v9M28.500 .5h8v9M28.500 .5v9M30.500 2.500h4M30.500 4.500h4M55.500 .5h8v9M55.500 .5v9M58 .5v4M61 .5v4" />
      </svg>
      <svg viewBox="0 0 90 8" className="ml-[10px] h-[8px] w-[90px]" fill="none" stroke="#b0b0ae">
        <path d="M1 3.500h5M10 4.500h66M80 3.500h5M82.500 1v5M43 2.500v4" />
      </svg>
      <span className="ml-[2px] text-[#aaa]">100%</span>
    </div>
  );
}

export default function App() {
  return (
    <div className="relative h-[720px] w-[1280px] overflow-hidden bg-black pt-[32px] font-['Open_Sans',sans-serif]">
      <div className="flex h-[657px] w-[1278px] flex-col overflow-hidden bg-[#f3f3f1]">
        <MenuTabs />
        <Ribbon />
        <FormulaBar />
        <div className="flex h-[426px] shrink-0 font-['Lato',sans-serif] text-[8.700px] leading-[10px] tracking-[-0.120px] text-[#111]">
          <div className="flex w-[1264px] shrink-0 flex-col overflow-hidden">
            <ColumnHeads />
            <div className="relative h-[414px] overflow-hidden">
              <div className="flex h-[419px] flex-col bg-[linear-gradient(to_right,#fff_570px,#9f9f9f_570px)] pt-[0.900px]">
                {rows.map((r) => (
                  <SheetRow key={r} r={r} />
                ))}
              </div>
              <div className="absolute top-[165px] left-[194px] font-['Liberation_Sans',sans-serif] text-[61.500px] leading-[68px] tracking-normal text-black/45">Pag</div>
              <LoadDrawing />
              <ShearChart />
              <MomentChart />
              <FormulaPicture />
              <div className="absolute top-[242px] left-[576px] h-[49px] w-[321px] border-[5px] border-[#ea0404]" />
            </div>
          </div>
          <div className="flex w-[12px] shrink-0 flex-col items-center justify-between bg-[#dcdcdc]">
            <div className="flex h-[10px] w-[10px] items-center justify-center border border-[#c6c6c6] bg-white">
              <svg viewBox="0 0 6 4" className="h-[3px] w-[5px]"><path d="M0 4h6L3 0z" fill="#555" /></svg>
            </div>
            <div className="flex h-[10px] w-[10px] items-center justify-center border border-[#c6c6c6] bg-white">
              <svg viewBox="0 0 6 4" className="h-[3px] w-[5px]"><path d="M0 0h6L3 4z" fill="#555" /></svg>
            </div>
          </div>
        </div>
        <SheetTabs />
        <StatusBar />
      </div>

      <svg viewBox="534 34 210 22" className="absolute top-[34px] left-[534px] h-[22px] w-[210px] font-['DejaVu_Sans',sans-serif] font-bold" fill="#fff" stroke="#444" strokeWidth="3" paintOrder="stroke" strokeLinejoin="round">
        <text x="540" y="50" fontSize="13" textLength="47" lengthAdjust="spacingAndGlyphs">www.</text>
        <text x="588" y="50.500" fontSize="14.500" textLength="108" lengthAdjust="spacingAndGlyphs">BANDICAM</text>
        <text x="697" y="50.500" fontSize="10" textLength="40" lengthAdjust="spacingAndGlyphs">.COM</text>
      </svg>

      <div className="absolute top-[97px] left-[208px] h-[56px] w-[56px] rounded-full bg-[#fbf7a6] mix-blend-multiply" />
      <svg viewBox="0 0 10 18" className="absolute top-[116px] left-[232px] h-[18px] w-[10px]" fill="none" stroke="#111" strokeWidth="1.500">
        <path d="M.8 1.200h3.200l1 .8 1-.8h3.200M5 1.500v15M.8 16.500h3.200l1-.8 1 .8h3.200" />
      </svg>
      <div className="absolute top-[121px] left-[224px] h-[10px] w-px bg-[#666]" />
    </div>
  );
}
